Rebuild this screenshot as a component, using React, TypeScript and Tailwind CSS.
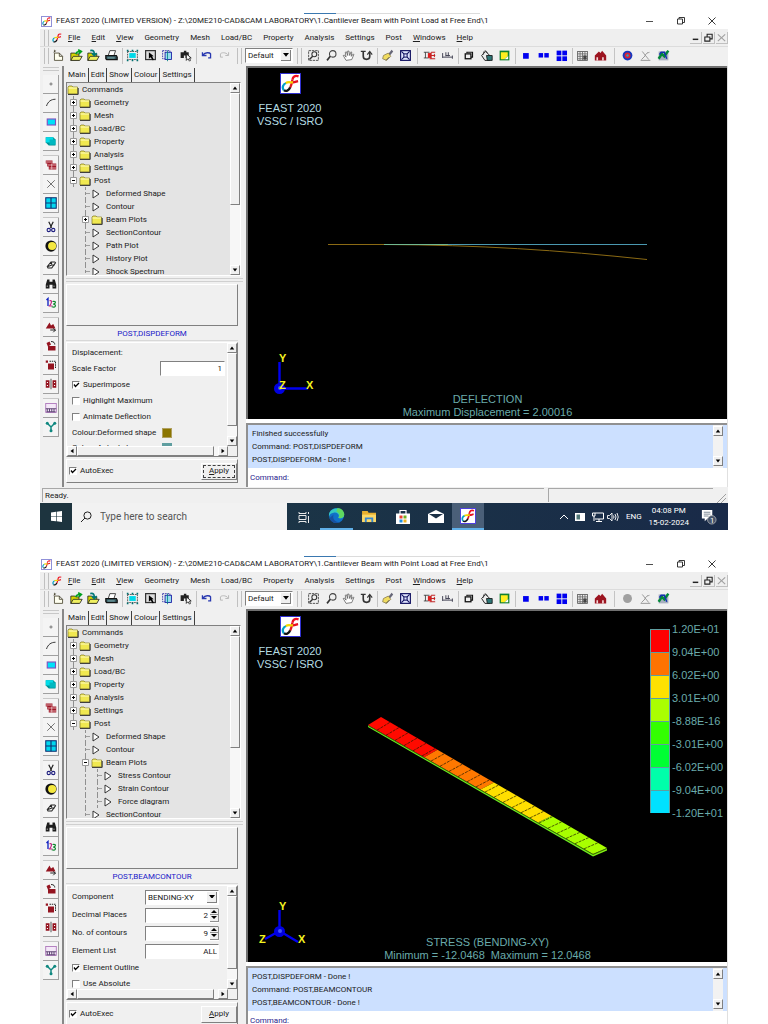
import type { ReactNode } from "react";
import clsx from "clsx";

type TreeNode = {
  label: string;
  depth: number;
  kind: "folder" | "command";
  state?: "plus" | "minus";
};

const menuItems = [
  { label: "File", key: true },
  { label: "Edit", key: true },
  { label: "View", key: true },
  { label: "Geometry" },
  { label: "Mesh" },
  { label: "Load/BC" },
  { label: "Property" },
  { label: "Analysis" },
  { label: "Settings" },
  { label: "Post" },
  { label: "Windows", key: true },
  { label: "Help", key: true },
];

const tabs = ["Main", "Edit", "Show", "Colour", "Settings"];

const baseTree: TreeNode[] = [
  { label: "Commands", depth: 0, kind: "folder" },
  { label: "Geometry", depth: 1, kind: "folder", state: "plus" },
  { label: "Mesh", depth: 1, kind: "folder", state: "plus" },
  { label: "Load/BC", depth: 1, kind: "folder", state: "plus" },
  { label: "Property", depth: 1, kind: "folder", state: "plus" },
  { label: "Analysis", depth: 1, kind: "folder", state: "plus" },
  { label: "Settings", depth: 1, kind: "folder", state: "plus" },
  { label: "Post", depth: 1, kind: "folder", state: "minus" },
  { label: "Deformed Shape", depth: 2, kind: "command" },
  { label: "Contour", depth: 2, kind: "command" },
];

const deflectionTree: TreeNode[] = [
  ...baseTree,
  { label: "Beam Plots", depth: 2, kind: "folder", state: "plus" },
  { label: "SectionContour", depth: 2, kind: "command" },
  { label: "Path Plot", depth: 2, kind: "command" },
  { label: "History Plot", depth: 2, kind: "command" },
  { label: "Shock Spectrum", depth: 2, kind: "command" },
];

const stressTree: TreeNode[] = [
  ...baseTree,
  { label: "Beam Plots", depth: 2, kind: "folder", state: "minus" },
  { label: "Stress Contour", depth: 3, kind: "command" },
  { label: "Strain Contour", depth: 3, kind: "command" },
  { label: "Force diagram", depth: 3, kind: "command" },
  { label: "SectionContour", depth: 2, kind: "command" },
];

const legendColors = [
  "bg-[#ff0000]",
  "bg-[#ff7300]",
  "bg-[#ffe100]",
  "bg-[#aaff00]",
  "bg-[#33ff00]",
  "bg-[#00ff33]",
  "bg-[#00ffaa]",
  "bg-[#00e1ff]",
];

const legendLabels = [
  "1.20E+01",
  "9.04E+00",
  "6.02E+00",
  "3.01E+00",
  "-8.88E-16",
  "-3.01E+00",
  "-6.02E+00",
  "-9.04E+00",
  "-1.20E+01",
];

const depthPadding = ["pl-0", "pl-[3px]", "pl-[15px]", "pl-[27px]"];

const raised = "border border-t-white border-l-white border-r-[#808080] border-b-[#808080]";
const sunken = "border border-t-[#808080] border-l-[#808080] border-r-white border-b-white";

function Svg({ className = "size-3.5", children }: { className?: string; children: ReactNode }) {
  return (
    <svg viewBox="0 0 16 16" className={clsx("shrink-0", className)} fill="none" aria-hidden>
      {children}
    </svg>
  );
}

function FeastMark({ className }: { className: string }) {
  return (
    <svg viewBox="0 0 20 20" className={clsx("shrink-0", className)} fill="none" strokeWidth="2.4" aria-hidden>
      <path d="M18.500 2.500 C14.500 1 12.500 3 12 6" stroke="#f01020" />
      <path d="M12 6 C11.500 9 11 12 9.600 14.500" stroke="#e01820" />
      <path d="M9.600 14 C8.500 17.500 5 18.800 3 17" stroke="#111111" />
      <path d="M3 17 C.8 14.500 2 10.500 5.500 9.500" stroke="#00a0c8" />
      <path d="M5 9.600 C8 7.600 10 9.400 13 8.600" stroke="#f5d800" />
      <path d="M12.500 8.800 C15 8.600 16 7.800 18 7.400" stroke="#e81020" />
    </svg>
  );
}

function Folder() {
  return (
    <svg viewBox="0 0 12 10" className="h-[10px] w-3 shrink-0" aria-hidden>
      <path d="M1 2 L2 1 H5 L6 2 H10.500 V9 H1 Z" fill="#f0e850" stroke="#8a8430" strokeWidth=".8" />
      <path d="M1.500 3 H10" stroke="#fffcc0" />
      <path d="M1 9.400 H11.200 V3" stroke="#333" fill="none" />
    </svg>
  );
}

const newFile = <path d="M3 5 H9 L13 9 V14 H3 Z M9 5 V9 H13 M2 4 L5 2 M3 1 V4" fill="#fffff0" stroke="#44402a" />;

const openFile = (
  <>
    <path d="M1 14 V5 H6 L7 6 H11 V14 Z" fill="#d8d800" stroke="#222" />
    <path d="M1 14 L4 9 H15 L12 14 Z" fill="#f0f060" stroke="#222" />
    <path d="M7 6 C8 3 10 3 12 3 M10 1 L14 3 L11 6" stroke="#00a020" strokeWidth="2" />
  </>
);

const saveFile = (
  <>
    <path d="M1 14 V5 H6 L7 6 H12 V14 Z" fill="#d8d800" stroke="#222" />
    <path d="M1 14 L4 9 H15 L12 14 Z" fill="#f0f060" stroke="#222" />
    <path d="M4 2 C8 1 9 3 9 7 M6 5 L9 8 L12 5" stroke="#007878" strokeWidth="2" />
  </>
);

const printer = (
  <>
    <path d="M4 8 L6 2 H13 L11 8" fill="#fff" stroke="#222" />
    <path d="M1 8 H14 L15 10 V13 H2 L1 12 Z" fill="#305058" stroke="#111" strokeWidth="1.500" />
    <path d="M3 11 H12" stroke="#9cc" />
  </>
);

const selectRegion = (
  <>
    <rect x="2" y="3" width="12" height="10" stroke="#333" strokeDasharray="2 1" />
    <rect x="4" y="5" width="8" height="6" fill="#00d8e8" />
    <path d="M1 2h2M13 2h2M1 14h2M13 14h2M7 2h2M7 14h2" stroke="#007070" strokeWidth="2" />
  </>
);

const pointer = (
  <>
    <rect x="2" y="2" width="12" height="11" stroke="#333" fill="#ddd" strokeWidth="1.5" />
    <path d="M6 4 V12 L8 10 L11 14 L12 13 L10 9 H12 Z" fill="#000" />
  </>
);

const copyRegion = (
  <>
    <rect x="2" y="2" width="9" height="10" stroke="#2020a0" strokeDasharray="2 1" />
    <rect x="5" y="4" width="8" height="9" fill="#9de" stroke="#1010a0" />
    <path d="M8 2 V15" stroke="#008080" />
  </>
);

const findPointer = (
  <>
    <path d="M2 4 H6 V2 H9 V4 H12 V11 H8 V8 H6 V11 H2 Z" fill="#222" />
    <path d="M9 6 V14 L11 12 L13 15 L14 14 L13 11 H15 Z" fill="#fff" stroke="#111" />
  </>
);

const undo = <path d="M3 4 V8 H8 M4 7 C6 4 12 4 13 6 V11 H10" stroke="#2838b0" strokeWidth="1.600" />;
const redo = <path d="M13 4 V8 H9 M12 7 C10 4 4 4 3 6 V10 H6" stroke="#b8b8b8" strokeWidth="1.200" />;

const zoomWindow = (
  <>
    <rect x="2" y="2" width="12" height="12" stroke="#555" strokeDasharray="3 1" strokeWidth="1.2" />
    <circle cx="9" cy="6.5" r="3" stroke="#333" strokeWidth="1.3" />
    <path d="M7 9 L3 13" stroke="#333" strokeWidth="1.8" />
  </>
);

const magnifier = (
  <>
    <circle cx="9.5" cy="6" r="4" stroke="#444" strokeWidth="1.3" />
    <path d="M6.5 9 L2.5 14" stroke="#333" strokeWidth="2" />
  </>
);

const hand = (
  <path
    d="M5 14 L1.5 8 L3 7.5 L5 10 L4 4 L5.5 3.5 L7 8 V2.5 H8.5 L9.5 8 L11 3.5 L12 4 L11.5 9 L14 6 L14.5 7 L12 13 Z"
    fill="#fff"
    stroke="#555"
    strokeWidth=".9"
  />
);

const rotate = (
  <>
    <path d="M4 3 V9 C4 14 12 14 12 9 V5" stroke="#333" strokeWidth="2" />
    <path d="M1 3 H7 M9 7 L12 3 L15 7" stroke="#333" strokeWidth="1.4" />
  </>
);

const brush = (
  <>
    <path d="M9 6 L13 1 L15 3 L11 8 Z" fill="#667" />
    <path d="M3 8 L9 5 L12 9 L7 14 L2 12 Z" fill="#f0dc60" stroke="#8a7c50" />
    <path d="M6 14 L10 10" stroke="#555" />
  </>
);

const fitView = (
  <>
    <rect x="2" y="2" width="12" height="12" fill="#dfe4ff" stroke="#101060" strokeWidth="1.4" />
    <rect x="6" y="6" width="4" height="4" stroke="#101060" strokeWidth="1.3" />
    <path d="M3 3 L6 6 M13 3 L10 6 M3 13 L6 10 M13 13 L10 10" stroke="#101060" strokeWidth="1.3" />
  </>
);

const labelToggle = (
  <>
    <path d="M1 4 H8 M1 11 H7 M3 4 V11" stroke="#333" />
    <rect x="6" y="5" width="4" height="6" fill="#dd2020" />
    <path d="M10 4 H15 M10 4 V12 M14 6 V10 M10 8 H15 M8 12 H15" stroke="#c02020" strokeWidth="1.2" />
  </>
);

const dimension = <path d="M2 5 V11 M14 8 V12 M2 10 H14 M6 4 V9 M9 4 V9 M6 8 H11" stroke="#445" strokeWidth="1.2" />;

const boxOutline = (
  <>
    <rect x="4" y="6" width="7" height="6" stroke="#111" strokeWidth="1.6" />
    <path d="M6 5 V4 H13 V10 H11" stroke="#111" strokeWidth="1.3" />
  </>
);

const paintCan = (
  <>
    <path d="M2 8 L7 3 L12 8 L12 14 H6 Z" fill="#eee" stroke="#222" strokeWidth="1.2" />
    <path d="M4 7 C4 1 8 1 9 5" stroke="#333" />
    <path d="M8 8 H15 V14 H9 Z" fill="#307878" stroke="#111" />
  </>
);

const shading = (
  <>
    <rect x="2" y="2" width="12" height="12" fill="#108030" />
    <path d="M3.500 4 H12 V9 L8 12.500 H3.500 Z" fill="#ffee20" />
    <path d="M8 12.500 L12.500 8.500 V12.500 Z" fill="#fff" />
  </>
);

const onePane = <rect x="5" y="5" width="7" height="7" fill="#0000f0" />;

const twoPane = (
  <>
    <rect x="2" y="5" width="5.500" height="5.500" fill="#0000f0" />
    <rect x="9" y="5" width="5.500" height="5.500" fill="#0000f0" />
  </>
);

const fourPane = (
  <>
    <rect x="2" y="2" width="5.800" height="5.800" fill="#0000f0" />
    <rect x="9" y="2" width="5.800" height="5.800" fill="#0000f0" />
    <rect x="2" y="9" width="5.800" height="5.800" fill="#0000f0" />
    <rect x="9" y="9" width="5.800" height="5.800" fill="#0000f0" />
  </>
);

const report = (
  <>
    <rect x="2" y="3" width="12" height="11" fill="#eee" stroke="#555" />
    <path d="M2 6 H14 M2 9 H14 M2 12 H14 M5 3 V14 M8 3 V14 M11 3 V14" stroke="#666" />
    <path d="M9 8 H13 V13 H9 Z" fill="#444" />
  </>
);

const house = (
  <>
    <path d="M1 8 L6 3 L8 5 L10 2 L15 8 V14 H1 Z" fill="#9c1420" />
    <path d="M3 10 H5 V14 H3 Z M10 10 H12 V14 H10 Z" fill="#f3d8d8" />
  </>
);

const target = (
  <>
    <circle cx="8" cy="8" r="6" fill="#1838c0" />
    <circle cx="8" cy="8" r="3.6" fill="#e02030" />
    <circle cx="8" cy="8" r="1.5" fill="#20a0d0" />
  </>
);

const targetOff = <circle cx="8" cy="8" r="5.5" fill="#a0a0a0" />;

const support = (
  <>
    <path d="M4 3 L12 13 M8 8 L3 13 M11 4 L7 8 M2 14 H14" stroke="#999" strokeWidth="1.2" />
    <path d="M10 5 L13 4" stroke="#999" />
  </>
);

const plotTool = (
  <>
    <rect x="2" y="3" width="12" height="11" fill="#a8b0c0" />
    <path d="M2 12 L6 6 L9 9 L14 2" stroke="#008838" strokeWidth="3" />
    <path d="M3 7 L5 4 H9 L12 12" stroke="#1030b0" strokeWidth="1.8" />
  </>
);

type ToolGroup = { names: string[]; icons: ReactNode[] };

const fileTools: ToolGroup = { names: ["New", "Open", "Save", "Print"], icons: [newFile, openFile, saveFile, printer] };
const selectTools: ToolGroup = {
  names: ["Select region", "Pick", "Copy region", "Find"],
  icons: [selectRegion, pointer, copyRegion, findPointer],
};
const historyTools: ToolGroup = { names: ["Undo", "Redo"], icons: [undo, redo] };
const viewTools: ToolGroup = {
  names: ["Zoom window", "Zoom", "Pan", "Rotate"],
  icons: [zoomWindow, magnifier, hand, rotate],
};
const refreshTools: ToolGroup = { names: ["Redraw", "Fit"], icons: [brush, fitView] };
const labelTools: ToolGroup = { names: ["Labels", "Dimensions"], icons: [labelToggle, dimension] };
const shadeTools: ToolGroup = { names: ["Wireframe", "Fill", "Shade"], icons: [boxOutline, paintCan, shading] };
const paneTools: ToolGroup = { names: ["One pane", "Two panes", "Four panes"], icons: [onePane, twoPane, fourPane] };
const reportTools: ToolGroup = { names: ["Report", "Home"], icons: [report, house] };

const gridWidths: Record<number, string> = {
  2: "w-[35px] grid-cols-2",
  3: "w-[53px] grid-cols-3",
  4: "w-[70px] grid-cols-4",
};

function Tools({ group }: { group: ToolGroup }) {
  return (
    <div className={clsx("grid shrink-0 justify-items-center", gridWidths[group.icons.length])}>
      {group.icons.map((icon, i) => (
        <button key={group.names[i]} type="button" aria-label={group.names[i]}>
          <Svg className="size-[13px]">{icon}</Svg>
        </button>
      ))}
    </div>
  );
}

function Sep({ className = "w-1" }: { className?: string }) {
  return (
    <span className={clsx("flex h-4 shrink-0 justify-center", className)}>
      <span className="w-px bg-[#c4c4c4]" />
    </span>
  );
}

function Grip() {
  return (
    <span className="flex h-4 w-3 shrink-0 justify-center gap-[3px]">
      <span className="w-px bg-[#c0c0c0]" />
      <span className="w-px bg-[#c0c0c0]" />
    </span>
  );
}

function DropArrow() {
  return (
    <span className="pointer-events-none absolute inset-y-px right-px flex w-[10px] items-center justify-center border-r border-b border-[#808080] bg-[#f0f0f0]">
      <svg viewBox="0 0 8 5" className="w-1.5" aria-hidden>
        <path d="M0 0 H8 L4 5 Z" fill="#000" />
      </svg>
    </span>
  );
}

function TitleBar() {
  return (
    <header className="bg-white">
      <div className="flex h-px pl-[264px]">
        <span className="w-8 bg-[#3a78b0]" />
        <span className="w-36 bg-[#dcdcdc]" />
      </div>
      <div className="flex h-[15px] items-center pr-3 pb-px pl-px">
        <span className="mr-1 border border-[#9090d8] bg-white">
          <FeastMark className="size-[9px]" />
        </span>
        <h1 className="flex-1 truncate">
          {"FEAST 2020 (LIMITED VERSION) - Z:\\20ME210-CAD&CAM LABORATORY\\1.Cantilever Beam with Point Load at Free End\\1"}
        </h1>
        <div className="flex items-center gap-[23px] text-black">
          <button type="button" aria-label="Minimize">
            <svg viewBox="0 0 8 8" className="size-2" stroke="#222" fill="none" aria-hidden>
              <path d="M0 4.5 H7" strokeWidth=".8" />
            </svg>
          </button>
          <button type="button" aria-label="Restore">
            <svg viewBox="0 0 8 8" className="size-2" stroke="#222" strokeWidth=".9" fill="none" aria-hidden>
              <path d="M.5 2 H5.5 V7 H.5 Z M2 2 V.5 H7.5 V5.5 H5.5" />
            </svg>
          </button>
          <button type="button" aria-label="Close">
            <svg viewBox="0 0 8 8" className="size-2" stroke="#222" strokeWidth=".9" fill="none" aria-hidden>
              <path d="M.5 .5 L7.5 7.5 M7.5 .5 L.5 7.5" />
            </svg>
          </button>
        </div>
      </div>
    </header>
  );
}

function MenuBar() {
  return (
    <nav className="flex h-[17px] items-center bg-[#efefef]" aria-label="Menu">
      <Grip />
      <FeastMark className="size-[10px]" />
      <ul className="ml-1.5 flex flex-1 gap-[11px]">
        {menuItems.map((item) => (
          <li key={item.label}>
            <button type="button">
              {item.key ? (
                <>
                  <u>{item.label[0]}</u>
                  {item.label.slice(1)}
                </>
              ) : (
                item.label
              )}
            </button>
          </li>
        ))}
      </ul>
      <div className="flex gap-px">
        <button type="button" aria-label="Minimize document" className="size-3 border-r border-b border-[#c0c0c0]">
          <svg viewBox="0 0 12 12" aria-hidden>
            <path d="M3 8 H9" stroke="#222" strokeWidth="1.6" />
          </svg>
        </button>
        <button type="button" aria-label="Restore document" className="size-3 border-r border-b border-[#c0c0c0]">
          <svg viewBox="0 0 12 12" fill="none" aria-hidden>
            <path d="M2 5.5 H7.5 V10 H2 Z M4.5 5 V2.5 H10 V7.5 H8" stroke="#222" strokeWidth="1.2" />
          </svg>
        </button>
        <button type="button" aria-label="Close document" className="size-3 border-r border-b border-[#c0c0c0]">
          <svg viewBox="0 0 12 12" aria-hidden>
            <path d="M2 2.5 L10 10 M10 2.5 L2 10" stroke="#a0a0a0" strokeWidth="1.2" />
          </svg>
        </button>
      </div>
    </nav>
  );
}

function Toolbar({ plotActive, id }: { plotActive: boolean; id: string }) {
  return (
    <div className="flex h-5 items-center overflow-hidden border-t border-[#dcdcdc] bg-[#f0f0f0] pb-0.5">
      <span className="-mr-0.5 flex">
        <Grip />
      </span>
      <Tools group={fileTools} />
      <Sep />
      <Tools group={selectTools} />
      <Sep />
      <Tools group={historyTools} />
      <Grip />
      <div className={clsx("relative h-[15px] w-12 shrink-0", sunken)}>
        <select
          aria-label="View name"
          id={`${id}-view`}
          className="block h-full w-full appearance-none bg-white pl-0.5 leading-[13px] outline-none"
        >
          <option>Default</option>
        </select>
        <DropArrow />
      </div>
      <Grip />
      <Tools group={viewTools} />
      <Sep />
      <Tools group={refreshTools} />
      <Sep className="w-[7px]" />
      <Tools group={labelTools} />
      <Sep />
      <Tools group={shadeTools} />
      <Sep />
      <Tools group={paneTools} />
      <Sep />
      <Tools group={reportTools} />
      <Sep className="w-[10px]" />
      <Tools
        group={{ names: ["Animate", "Supports", "Plot"], icons: [plotActive ? target : targetOff, support, plotTool] }}
      />
    </div>
  );
}

const railGroups: ToolGroup[] = [
  {
    names: ["Point", "Arc", "Surface", "Solid"],
    icons: [
      <circle cx="8" cy="8" r="1.4" stroke="#555" />,
      <path d="M2 12 C4 6 8 3 14 3" stroke="#333" strokeWidth="1.3" />,
      <rect x="3" y="4" width="11" height="8" fill="#00e0f8" stroke="#8050c0" strokeWidth="1.5" />,
      <>
        <path d="M1 3 H11 L14 6 V14 H5 L1 10 Z" fill="#008c90" />
        <rect x="1" y="3" width="10" height="7" fill="#00dce8" />
        <path d="M6 6 H14 V13 H6 Z" fill="#00b8c0" />
      </>,
    ],
  },
  {
    names: ["Mesh", "Erase", "Grid"],
    icons: [
      <>
        <path d="M1 2 H10 V6 H1 Z M3 6 H15 V10 H3 Z M5 10 H15 V14 H5 Z" fill="#a01828" />
        <path d="M1 4 H10 M4 8 H15 M6 12 H15 M9 6 V14" stroke="#f0d0d0" />
      </>,
      <path d="M3 3 L13 13 M13 3 L3 13" stroke="#666" strokeWidth="1.2" />,
      <>
        <rect x="1" y="1" width="14" height="14" fill="#00d8f0" stroke="#103070" strokeWidth="1.4" />
        <path d="M8 1 V15 M1 8 H15" stroke="#103070" strokeWidth="1.5" />
      </>,
    ],
  },
  {
    names: ["Cut", "Moon", "Eraser", "Find", "Number"],
    icons: [
      <>
        <path d="M5 1 L9 9 M11 1 L7 9" stroke="#222" strokeWidth="1.6" />
        <circle cx="5" cy="12" r="2.2" stroke="#202080" strokeWidth="1.5" />
        <circle cx="11" cy="12" r="2.2" stroke="#202080" strokeWidth="1.5" />
      </>,
      <>
        <circle cx="8" cy="8" r="7.500" fill="#111" />
        <circle cx="9.500" cy="8" r="5.400" fill="#f4e840" />
      </>,
      <path d="M3 10 L8 4 H13 L14 5 L9 12 H4 Z M8 4 L9 7 M4 10 L9 8 H13" stroke="#222" strokeWidth="1.4" />,
      <>
        <path d="M3 2 H6 V5 H10 V2 H13 L15 9 V14 H10 V9 H6 V14 H1 V9 Z" fill="#1c1c1c" />
        <path d="M3 10 V12 M12 10 V12" stroke="#ccc" />
      </>,
      <>
        <path d="M2 4 L4 2 V12" stroke="#1020c0" strokeWidth="1.8" />
        <path d="M6 5 C10 4 9 8 6 12 H10" stroke="#c02080" strokeWidth="1.6" />
        <path d="M10 6 C16 5 14 9 11 9.5 C16 10 14 15 9 13" stroke="#108830" strokeWidth="1.6" />
      </>,
    ],
  },
  {
    names: ["Move", "Rotate copy", "Scale", "Mirror"],
    icons: [
      <>
        <path d="M1 10 L6 2 L8 6 L11 4 L14 10 Z" fill="#941420" />
        <path d="M7 12 H14 M11 10 L14 12 L11 15" stroke="#222" strokeWidth="1.3" />
      </>,
      <>
        <path d="M4 8 H14 V14 H4 Z M2 4 L6 2 L8 6 L4 9 Z" fill="#941420" />
        <path d="M8 2 C12 2 13 4 13 6" stroke="#222" strokeWidth="1.3" />
      </>,
      <>
        <path d="M4 6 H12 V14 H4 Z M1 2 H4 V5 H1 Z" fill="#941420" />
        <path d="M6 3 H14 V12" stroke="#222" strokeDasharray="2 1" strokeWidth="1.3" />
      </>,
      <>
        <path d="M1 3 H6 V13 H1 Z M10 3 H15 V13 H10 Z" fill="#941420" />
        <path d="M2.5 6 H4 M2.5 10 H4 M12 6 H13.5 M12 10 H13.5" stroke="#fff" strokeWidth="1.4" />
        <path d="M8 1 V15" stroke="#222" />
      </>,
    ],
  },
  {
    names: ["Load", "Branch"],
    icons: [
      <>
        <rect x="1" y="2" width="14" height="12" fill="#f4e8f8" stroke="#a060b0" />
        <path d="M1 9 H15 M3 9 V13 M6 9 V13 M9 9 V13 M12 9 V13 M2 13 H14" stroke="#503868" strokeWidth="1.2" />
      </>,
      <>
        <path d="M3 3 L8 8 L13 3 M8 8 V14" stroke="#108880" strokeWidth="2" />
        <circle cx="3" cy="3" r="2" fill="#108880" />
        <circle cx="13" cy="3" r="2" fill="#108880" />
        <circle cx="8" cy="13" r="2" fill="#108880" />
      </>,
    ],
  },
];

function Rail() {
  return (
    <aside className="flex w-[22px] shrink-0 flex-col items-center gap-[5px] bg-[#f0f0f0] pt-px">
      <span className="h-1 w-4 border-y border-[#c8c8c8]" />
      {railGroups.map((group, g) => (
        <div key={group.names[0]} className={clsx("-mt-px", g > 0 && "border-t border-[#c8c8c8]")}>
          {group.icons.map((icon, i) => (
            <button
              key={group.names[i]}
              type="button"
              aria-label={group.names[i]}
              className="flex h-[19px] w-4 items-center justify-center border-r border-b border-[#a0a0a0] bg-[#f4f4f4]"
            >
              <Svg className="size-3">{icon}</Svg>
            </button>
          ))}
        </div>
      ))}
    </aside>
  );
}

function ScrollButton({ dir }: { dir: "up" | "down" | "left" | "right" }) {
  const paths = {
    up: "M4 2 L7 6 H1 Z",
    down: "M4 6 L1 2 H7 Z",
    left: "M2 4 L6 1 V7 Z",
    right: "M6 4 L2 1 V7 Z",
  };
  return (
    <button
      type="button"
      aria-label={`Scroll ${dir}`}
      className={clsx("flex size-[10px] shrink-0 items-center justify-center bg-[#f0f0f0]", raised)}
    >
      <svg viewBox="0 0 8 8" className="size-1.5" aria-hidden>
        <path d={paths[dir]} fill="#000" />
      </svg>
    </button>
  );
}

function VScroll({ thumb }: { thumb: string }) {
  return (
    <div className="flex w-[10px] shrink-0 flex-col bg-[#f7f7f7]">
      <ScrollButton dir="up" />
      <span className={clsx("bg-[#f0f0f0]", raised, thumb)} />
      <span className="flex-1" />
      <ScrollButton dir="down" />
    </div>
  );
}

function Guide({ className }: { className: string }) {
  return <span className={clsx("absolute inset-y-0 border-l border-dashed border-[#909090]", className)} />;
}

function TreeRow({ node }: { node: TreeNode }) {
  return (
    <li className={clsx("relative flex h-[13px] items-center", depthPadding[node.depth])}>
      {node.depth === 1 && <Guide className="left-1.5" />}
      {node.depth > 1 && <Guide className="left-[18px]" />}
      {node.depth > 2 && <Guide className="left-[30px]" />}
      {node.depth > 0 && (
        <span className="relative flex w-[9px] shrink-0">
          {node.state ? (
            <svg viewBox="0 0 7 7" className="size-[7px]" aria-hidden>
              <path d="M.5 .5 H6.5 V6.5 H.5 Z" fill="#fff" stroke="#999" />
              <path d={node.state === "plus" ? "M2 3.5 H5 M3.5 2 V5" : "M2 3.5 H5"} stroke="#000" />
            </svg>
          ) : (
            <span className="ml-1 h-px w-1 bg-[#a0a0a0]" />
          )}
        </span>
      )}
      {node.kind === "folder" ? (
        <Folder />
      ) : (
        <svg viewBox="0 0 12 10" className="h-[10px] w-3 shrink-0" fill="#fff" aria-hidden>
          <path d="M2 1 L8 5 L2 9 Z" stroke="#222" strokeWidth=".9" />
        </svg>
      )}
      <span className="ml-[3px] whitespace-nowrap">{node.label}</span>
    </li>
  );
}

function Check({ label, checked = false }: { label: string; checked?: boolean }) {
  return (
    <label className="flex h-4 items-center gap-[3px]">
      <span className="relative flex">
        <input
          type="checkbox"
          defaultChecked={checked}
          className={clsx("peer size-2 appearance-none bg-white", sunken)}
        />
        <svg
          viewBox="0 0 8 8"
          className="pointer-events-none absolute inset-0 hidden size-2 peer-checked:block"
          fill="none"
          aria-hidden
        >
          <path d="M2 3.5 L3.5 5.5 L7 2" stroke="#000" strokeWidth="1.3" />
        </svg>
      </span>
      {label}
    </label>
  );
}

function DeflectionForm() {
  return (
    <div className="flex-1 overflow-hidden pl-[5px]">
      <p className="flex h-[17px] items-center pt-0.5">Displacement:</p>
      <div className="flex h-[17px] items-center justify-between pr-0.5">
        <label htmlFor="scale">Scale Factor</label>
        <input id="scale" defaultValue="1" className={clsx("h-[15px] w-[65px] bg-white pr-0.5 text-right", sunken)} />
      </div>
      <Check label="Superimpose" checked />
      <Check label="Highlight Maximum" />
      <Check label="Animate Deflection" />
      <div className="flex h-[15px] items-center gap-1.5">
        Colour:Deformed shape
        <button type="button" aria-label="Deformed colour" className="size-[10px] border border-[#b0a060] bg-[#8b7500]" />
      </div>
      <div className="flex h-[15px] items-center gap-1.5">
        Colour:Actual shape
        <button type="button" aria-label="Actual colour" className="ml-3 size-[10px] bg-[#5f9ea0]" />
      </div>
    </div>
  );
}

function Spinner() {
  return (
    <span className="absolute inset-y-px right-0 flex w-[9px] flex-col bg-[#f0f0f0]">
      {["M1 4 L4 1 L7 4 Z", "M1 1 L4 4 L7 1 Z"].map((d, i) => (
        <button
          key={d}
          type="button"
          aria-label={i === 0 ? "Increase" : "Decrease"}
          className="flex flex-1 items-center justify-center border-r border-b border-[#909090]"
        >
          <svg viewBox="0 0 8 5" className="h-[5px] w-2" aria-hidden>
            <path d={d} fill="#000" />
          </svg>
        </button>
      ))}
    </span>
  );
}

function StressForm() {
  const rows = [
    { id: "decimals", label: "Decimal Places", value: "2", spin: true },
    { id: "contours", label: "No. of contours", value: "9", spin: true },
    { id: "elements", label: "Element List", value: "ALL", spin: false },
  ];
  return (
    <div className="flex-1 overflow-hidden pt-0.5 pl-[5px]">
      <div className="flex h-[18px] items-center justify-between pr-2">
        <label htmlFor="component">Component</label>
        <span className={clsx("relative h-[15px] w-[74px]", sunken)}>
          <select id="component" className="block h-full w-full appearance-none bg-white pl-0.5 leading-[13px]">
            <option>BENDING-XY</option>
          </select>
          <DropArrow />
        </span>
      </div>
      {rows.map((row) => (
        <div key={row.id} className="flex h-[18px] items-center justify-between pr-2">
          <label htmlFor={row.id}>{row.label}</label>
          <span className="relative h-[15px] w-[74px]">
            <input
              id={row.id}
              defaultValue={row.value}
              className={clsx("block h-full w-full bg-white text-right", sunken, row.spin ? "pr-2.5" : "pr-px")}
            />
            {row.spin && <Spinner />}
          </span>
        </div>
      ))}
      <Check label="Element Outline" checked />
      <Check label="Use Absolute" />
    </div>
  );
}

function SidePanel({
  tree,
  command,
  children,
  focused,
}: {
  tree: TreeNode[];
  command: string;
  children: ReactNode;
  focused: boolean;
}) {
  return (
    <section className="w-[183px] shrink-0 border-l-2 border-[#888888] bg-[#f0f0f0] px-0.5 pb-1">
      <div className="flex h-4 items-end" role="tablist">
        {tabs.map((tab, i) => (
          <button
            key={tab}
            type="button"
            role="tab"
            aria-selected={i === 0}
            className={clsx("h-[14px] border-r border-[#404040] px-0.5", i === 0 && "pb-px")}
          >
            {tab}
          </button>
        ))}
      </div>
      <div className={clsx("flex h-[194px] w-[175px] overflow-hidden bg-[#e4e4e4]", sunken)}>
        <ul className="flex-1 overflow-hidden">
          {tree.map((node) => (
            <TreeRow key={node.label} node={node} />
          ))}
        </ul>
        <VScroll thumb="h-[112px]" />
      </div>
      <div className="mt-0.5 h-1 border-y border-[#d0d0d0]" />
      <div className={clsx("mt-0.5 h-[42px] w-[172px]", raised)} />
      <h2 className="mt-px flex h-[14px] w-[172px] items-center justify-center border-b border-[#d8d8d8] text-[#2018c8]">
        {command}
      </h2>
      <div className={clsx("mt-px flex h-[115px] w-[172px] flex-col", raised)}>
        <div className="flex h-[103px] overflow-hidden">
          {children}
          <VScroll thumb="h-[73px]" />
        </div>
        <div className="flex w-[161px] bg-[#f7f7f7]">
          <ScrollButton dir="left" />
          <span className={clsx("flex-1 bg-[#f0f0f0]", raised)} />
          <span className="w-1" />
          <ScrollButton dir="right" />
        </div>
      </div>
      <div className={clsx("mt-0.5 flex h-6 w-[172px] items-center justify-between pl-0.5", raised)}>
        <Check label="AutoExec" checked />
        <button type="button" className={clsx("h-[17px] w-9 p-px", raised)}>
          <span className={clsx("flex h-full items-center justify-center", focused && "border border-dashed border-[#404040]")}>
            <u>A</u>pply
          </span>
        </button>
      </div>
    </section>
  );
}

function AxisBall({ cx, cy }: { cx: number; cy: number }) {
  return (
    <>
      <circle cx={cx} cy={cy} r="5.5" fill="#0000e0" />
      <circle cx={cx + 0.5} cy={cy - 0.5} r="2" fill="#4050f8" />
    </>
  );
}

function Caption({ lines }: { lines: string[] }) {
  return (
    <div className="absolute inset-x-0 bottom-0 text-center text-[11px] leading-[13px] text-[#6aabab]">
      {lines.map((line) => (
        <p key={line} className="whitespace-pre">
          {line}
        </p>
      ))}
    </div>
  );
}

function Viewport({ children }: { children: ReactNode }) {
  return (
    <div className="relative h-[353px] overflow-hidden border-t-2 border-l-2 border-[#707070] bg-black font-['Liberation_Sans',sans-serif]">
      {children}
      <div className="absolute top-[5px] left-2.5 flex w-16 flex-col items-center text-[11px] leading-[13px] whitespace-nowrap text-[#b4dce2]">
        <span className="mb-2 border border-[#3030d0] bg-white">
          <FeastMark className="size-[19px]" />
        </span>
        <p>FEAST 2020</p>
        <p>VSSC / ISRO</p>
      </div>
    </div>
  );
}

function DeflectionView() {
  return (
    <Viewport>
      <svg viewBox="0 0 479 351" className="absolute inset-0 h-full w-full" fill="none" aria-label="Deflected beam">
        <path d="M80 176.500 H399" stroke="#4a98b0" />
        <path d="M80 176.500 H136 C230 177 310 182 399 191.500" stroke="#8b6a14" />
        <path d="M136 176.500 H200" stroke="#70b890" />
        <path d="M31.500 294 V319 M32 320.500 H60" stroke="#0000f0" strokeWidth="2.400" />
        <AxisBall cx={31.5} cy={320.5} />
        <g fill="#f4f420" fontSize="11" fontWeight="bold" fontFamily="Liberation Sans">
          <text x="31" y="294">Y</text>
          <text x="31" y="321">Z</text>
          <text x="58" y="321">X</text>
        </g>
      </svg>
      <Caption lines={["DEFLECTION", "Maximum Displacement = 2.00016"]} />
    </Viewport>
  );
}

// Beam corners on the top face: near edge starts at (120,114), far edge at (133,106).
const near = { x0: 120, y0: 114, x1: 345, y1: 243 };
const far = { x0: 133, y0: 106, x1: 359, y1: 237 };

function pointAt(edge: typeof near, t: number) {
  return `${edge.x0 + (edge.x1 - edge.x0) * t} ${edge.y0 + (edge.y1 - edge.y0) * t}`;
}

const bands = [
  { from: 0, to: 0.25, fill: "#ff0a00" },
  { from: 0.25, to: 0.5, fill: "#ff7800" },
  { from: 0.5, to: 0.755, fill: "#ffdf00" },
  { from: 0.755, to: 1, fill: "#a8ff00" },
];

function StressView() {
  return (
    <Viewport>
      <svg viewBox="0 0 479 351" className="absolute inset-0 h-full w-full" fill="none" aria-label="Stress contour">
        <path d="M120 114 L345 243 V245.500 L120 116 Z" fill="#70f020" />
        <path d="M345 243 L359 237 V239.500 L345 245.500 Z" fill="#80f010" />
        {bands.map((band) => (
          <path
            key={band.fill}
            d={`M${pointAt(near, band.from)} L${pointAt(far, band.from)} L${pointAt(far, band.to)} L${pointAt(near, band.to)} Z`}
            fill={band.fill}
          />
        ))}
        {Array.from({ length: 24 }, (_, i) => (
          <path
            key={i}
            d={`M${pointAt(near, (i + 1) / 25)} L${pointAt(far, (i + 1) / 25)}`}
            stroke="#201800"
            strokeWidth=".7"
            strokeDasharray="3 1"
          />
        ))}
        <path d="M120 114.500 L345 243.500 L359 237.500" stroke="#203000" strokeWidth=".7" />
        <path d="M31.500 299 V320 M31.500 320 L17 328 M31.500 320 L50 331" stroke="#0000f0" strokeWidth="2.400" />
        <AxisBall cx={31.5} cy={320.5} />
        <g fill="#f4f420" fontSize="11" fontWeight="bold" fontFamily="Liberation Sans">
          <text x="31" y="299">Y</text>
          <text x="11" y="332">Z</text>
          <text x="50" y="332">X</text>
        </g>
      </svg>
      <div className="absolute top-[7px] right-[7px] flex gap-0.5 text-[11px] leading-[23px] text-[#6aabab]">
        <div className="mt-[11px] flex w-5 flex-col">
          {legendColors.map((color) => (
            <span key={color} className={clsx("h-[23px] border border-b-0 border-[#5f9ea0]", color)} />
          ))}
        </div>
        <ul className="w-12 whitespace-nowrap">
          {legendLabels.map((label) => (
            <li key={label}>{label}</li>
          ))}
        </ul>
      </div>
      <Caption lines={["STRESS (BENDING-XY)", "Minimum = -12.0468  Maximum = 12.0468"]} />
    </Viewport>
  );
}

function Console({ lines, id }: { lines: string[]; id: string }) {
  return (
    <div className="mt-1 border-t-2 border-l-2 border-[#909090] bg-white">
      <div className="flex h-[43px] bg-[#cce0ff] pr-1">
        <div className="flex-1 pt-0.5 pl-1">
          {lines.map((line) => (
            <p key={line} className="h-[13px] leading-[13px]">
              {line}
            </p>
          ))}
        </div>
        <div className="flex w-[10px] flex-col justify-between bg-[#f2f2f2] pt-px pb-0.5">
          <ScrollButton dir="up" />
          <ScrollButton dir="down" />
        </div>
      </div>
      <div className="flex h-[19px] items-center pl-0.5 text-[#281c8c]">
        <label htmlFor={`${id}-command`}>Command:</label>
        <input id={`${id}-command`} className="min-w-0 flex-1 outline-none" />
      </div>
    </div>
  );
}

function Taskbar() {
  return (
    <footer className="flex h-[27px] items-center bg-linear-to-r from-[#1c3a45] to-[#192a48] text-white">
      <button type="button" aria-label="Start" className="flex h-full w-8 items-center justify-center bg-[#1d343f]">
        <svg viewBox="0 0 12 12" className="size-[11px]" fill="#fff" aria-hidden>
          <path d="M0 1.500 L5.500 .8 V5.700 H0 Z M6.200 .7 L12 0 V5.700 H6.200 Z M0 6.300 H5.500 V11.200 L0 10.500 Z M6.200 6.300 H12 V12 L6.200 11.300 Z" />
        </svg>
      </button>
      <label className="flex h-full w-[215px] items-center gap-2 bg-[#f2f2f2] pl-2">
        <svg viewBox="0 0 12 12" className="size-3" fill="none" stroke="#222" aria-hidden>
          <circle cx="7.500" cy="4.500" r="3.600" />
          <path d="M5 7 L1 11" />
        </svg>
        <input
          aria-label="Search"
          placeholder="Type here to search"
          className="w-40 bg-transparent text-[10px] outline-none placeholder:text-[#555555]"
        />
      </label>
      <div className="grid h-full flex-none grid-cols-6">
        <button type="button" aria-label="Task view" className="flex w-[33px] items-center justify-center">
          <svg viewBox="0 0 12 12" className="size-3" fill="none" stroke="#e8e8e8" aria-hidden>
            <path d="M1 1 V2.500 H8 V1 M1 4.500 H8 V8.500 H1 Z M1 12 V10.500 H8 V12 M10.500 1 V3 M10.500 5 V12" />
          </svg>
        </button>
        <button type="button" aria-label="Edge" className="flex w-[33px] items-center justify-center border-b-2 border-[#60b0e8]">
          <svg viewBox="0 0 18 18" className="size-[17px]" aria-hidden>
            <circle cx="9" cy="9" r="8" fill="#1070c8" />
            <path d="M1 8 C2 0 14 -1 17 7 C18 12 12 13 11 11 C13 8 9 5 6 6 C3 6.500 1.500 8 1 10 Z" fill="#35c8c0" />
            <path d="M10 1 C15 1 18 6 17 9 C16 12 12 12.500 11 11 C13 9 12 6 9 5 Z" fill="#60d860" />
            <path d="M6 8 C4 12 8 17 13 16 C9 18 3 17 1.500 12 Z" fill="#1850a0" />
          </svg>
        </button>
        <button type="button" aria-label="File Explorer" className="flex w-[33px] items-center justify-center">
          <svg viewBox="0 0 16 14" className="h-[13px] w-[15px]" aria-hidden>
            <path d="M0 1 H6 L7 3 H15 V13 H0 Z" fill="#e8b030" />
            <path d="M0 5 H15 V13 H0 Z" fill="#fbd868" />
            <path d="M3 8 H12 V13 H10 V10 H5 V13 H3 Z" fill="#3888d0" />
          </svg>
        </button>
        <button type="button" aria-label="Store" className="flex w-[33px] items-center justify-center">
          <svg viewBox="0 0 16 16" className="size-4" aria-hidden>
            <path d="M5 5 V1.500 H11 V5" fill="none" stroke="#fff" strokeWidth="1.200" />
            <path d="M1 4.500 H15 V15 H1 Z" fill="#fff" />
            <path d="M4.500 6.500 H7.500 V9.500 H4.500 Z" fill="#e84030" />
            <path d="M8.500 6.500 H11.500 V9.500 H8.500 Z" fill="#70b020" />
            <path d="M4.500 10.500 H7.500 V13.500 H4.500 Z" fill="#2090e0" />
            <path d="M8.500 10.500 H11.500 V13.500 H8.500 Z" fill="#f0b020" />
          </svg>
        </button>
        <button type="button" aria-label="Mail" className="flex w-[33px] items-center justify-center">
          <svg viewBox="0 0 16 13" className="h-[13px] w-4" aria-hidden>
            <path d="M0 4 L8 0 L16 4 V13 H0 Z" fill="#fff" />
            <path d="M1 4 H15 L8 8.500 Z" fill="#1b3046" />
          </svg>
        </button>
        <button type="button" aria-label="FEAST" className="flex w-8 items-center justify-center border-b-2 border-[#60b0e8] bg-[#4a5f78]">
          <span className="border border-[#5040e0] bg-white">
            <FeastMark className="size-[14px]" />
          </span>
        </button>
      </div>
      <div className="ml-auto flex items-center gap-[7px] pr-[11px]">
        <svg viewBox="0 0 8 6" className="w-2" fill="none" stroke="#fff" aria-hidden>
          <path d="M0 5 L4 1 L8 5" />
        </svg>
        <svg viewBox="0 0 10 8" className="w-[10px]" aria-hidden>
          <path d="M0 0 H10 V8 H0 Z" fill="#fff" />
          <path d="M1.500 1.500 H5 V6.500 H1.500 Z" fill="#507878" />
        </svg>
        <svg viewBox="0 0 12 10" className="w-3" fill="none" stroke="#fff" aria-hidden>
          <path d="M3 1 H11.500 V7 H3 M7 7 V9.500 M4 9.500 H10 M.5 1 H3 V4 H.5 Z M2 4 V9" />
        </svg>
        <svg viewBox="0 0 12 10" className="-ml-1 w-3" fill="none" stroke="#fff" strokeWidth=".9" aria-hidden>
          <path d="M.5 3.500 H2.500 L5 1 V9 L2.500 6.500 H.5 Z M6.500 3.500 Q7.500 5 6.500 6.500 M8 2 Q10 5 8 8 M10 1 Q12.500 5 10 9" />
        </svg>
        <span>ENG</span>
        <div className="text-center leading-3">
          <p>04:08 PM</p>
          <p>15-02-2024</p>
        </div>
        <svg viewBox="0 0 18 18" className="ml-1 size-[17px]" aria-hidden>
          <path d="M2 2 H13 V11 H8 L5 14 V11 H2 Z" fill="#fff" />
          <path d="M4 4.500 H11 M4 6.500 H11 M4 8.500 H9" stroke="#567" strokeWidth=".8" />
          <circle cx="12.500" cy="12.500" r="4.500" fill="#46546a" stroke="#ccc" strokeWidth=".7" />
          <text x="10.700" y="15.500" fontSize="8" fill="#fff">1</text>
        </svg>
      </div>
    </footer>
  );
}

function FeastWindow({
  id,
  tree,
  command,
  form,
  view,
  log,
  active,
}: {
  id: string;
  tree: TreeNode[];
  command: string;
  form: ReactNode;
  view: ReactNode;
  log: string[];
  active: boolean;
}) {
  return (
    <article>
      <TitleBar />
      <MenuBar />
      <Toolbar plotActive={active} id={id} />
      <main className="flex bg-[#f0f0f0]">
        <Rail />
        <SidePanel tree={tree} command={command} focused={active}>
          {form}
        </SidePanel>
        <div className="ml-px min-w-0 flex-1 border-r border-[#e0e0e0] bg-white">
          {view}
          <Console lines={log} id={id} />
        </div>
      </main>
      <div className="flex h-4 items-center gap-1 bg-[#f0f0f0] pr-0.5 pl-0.5">
        <p className="flex h-[14px] flex-1 items-center border-t border-l border-[#a8a8a8] pl-0.5">Ready.</p>
        <span className="h-[14px] w-[165px] border-t border-l border-[#a8a8a8]" />
        <svg viewBox="0 0 9 9" className="size-[9px] self-end" stroke="#a0a0a0" aria-hidden>
          <path d="M0 9 L9 0 M4 9 L9 4" />
        </svg>
      </div>
      <Taskbar />
    </article>
  );
}

export default function App() {
  return (
    <div className="flex h-screen flex-col gap-[26px] overflow-hidden bg-white px-10 pt-[13px] font-['Roboto','Noto_Sans',sans-serif] text-[8px] leading-3 text-[#202020]">
      <FeastWindow
        id="deflection"
        tree={deflectionTree}
        command="POST,DISPDEFORM"
        form={<DeflectionForm />}
        view={<DeflectionView />}
        log={["Finished successfully", "Command: POST,DISPDEFORM", "POST,DISPDEFORM - Done !"]}
        active
      />
      <FeastWindow
        id="stress"
        tree={stressTree}
        command="POST,BEAMCONTOUR"
        form={<StressForm />}
        view={<StressView />}
        log={["POST,DISPDEFORM - Done !", "Command: POST,BEAMCONTOUR", "POST,BEAMCONTOUR - Done !"]}
        active={false}
      />
    </div>
  );
}
